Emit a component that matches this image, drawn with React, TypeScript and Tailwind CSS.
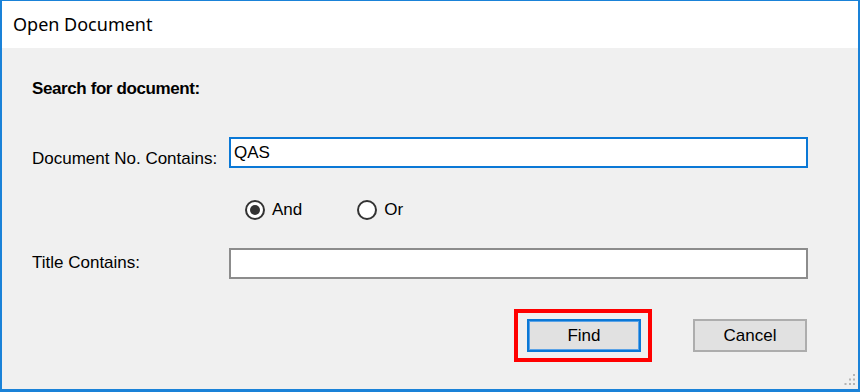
import React from "react";

function Radio({ checked, label }: { checked: boolean; label: string }) {
  return (
    <div className="flex items-center">
      <div className="w-[20px] h-[20px] rounded-full border-2 border-[#333333] bg-white flex items-center justify-center">
        {checked && <div className="w-[10px] h-[10px] rounded-full bg-[#333333]" />}
      </div>
      <span className="ml-[7px] text-[17px] leading-[20px] text-black">{label}</span>
    </div>
  );
}

export default function App() {
  return (
    <div
      className="w-[860px] h-[392px] flex flex-col border-t border-x-2 border-b-[3px] border-[#1a82d8] bg-[#f0f0f0] overflow-hidden"
      style={{ fontFamily: '"Liberation Sans", Arial, sans-serif' }}
    >
      <div
        className="h-[47px] shrink-0 bg-white flex items-center pl-[11px] text-[18px] text-black"
        style={{ fontFamily: '"Noto Sans", "Open Sans", sans-serif' }}
      >
        Open Document
      </div>
      <div className="relative flex-1 flex flex-col pl-[30px] text-black">
        <div className="mt-[31px] text-[17px] leading-[20px] font-bold tracking-[-0.4px]">
          Search for document:
        </div>

        <div className="mt-[38px] flex items-start">
          <div className="w-[197px] mt-[12px] text-[17px] leading-[20px]">Document No. Contains:</div>
          <div className="w-[579px] h-[31px] bg-white border-2 border-[#0a78d6] flex items-center pl-[3px] text-[17px] leading-[20px]">
            QAS
          </div>
        </div>

        <div className="mt-[31px] flex items-center pl-[213px] h-[20px]">
          <Radio checked label="And" />
          <div className="ml-[55px]">
            <Radio checked={false} label="Or" />
          </div>
        </div>

        <div className="mt-[28px] flex items-start">
          <div className="w-[197px] mt-[5px] text-[17px] leading-[20px]">Title Contains:</div>
          <div className="w-[579px] h-[31px] bg-white border-2 border-[#8c8c8c]" />
        </div>

        <div className="mt-[40px] flex items-start pl-[495px]">
          <div className="relative">
            <button className="w-[114px] h-[33px] bg-[#e1e1e1] border-2 border-[#0a78d6] shadow-[inset_0_0_0_1px_#5aa2e6] text-[17px] leading-[20px] text-black">
              Find
            </button>
            <div className="absolute -left-[13px] -right-[11px] -top-[10px] -bottom-[10px] border-4 border-[#ff0000] pointer-events-none" />
          </div>
          <button className="ml-[52px] w-[114px] h-[33px] bg-[#e1e1e1] border-2 border-[#adadad] text-[17px] leading-[20px] text-black">
            Cancel
          </button>
        </div>

        <svg className="absolute right-[1px] bottom-[2px]" width="14" height="14" viewBox="0 0 14 14">
          <rect x="10" y="1" width="2" height="2" fill="#b4b4b4" />
          <rect x="6" y="5.5" width="2" height="2" fill="#b4b4b4" />
          <rect x="10" y="5.5" width="2" height="2" fill="#b4b4b4" />
          <rect x="1.5" y="10" width="2" height="2" fill="#b4b4b4" />
          <rect x="6" y="10" width="2" height="2" fill="#b4b4b4" />
          <rect x="10" y="10" width="2" height="2" fill="#b4b4b4" />
        </svg>
      </div>
    </div>
  );
}
